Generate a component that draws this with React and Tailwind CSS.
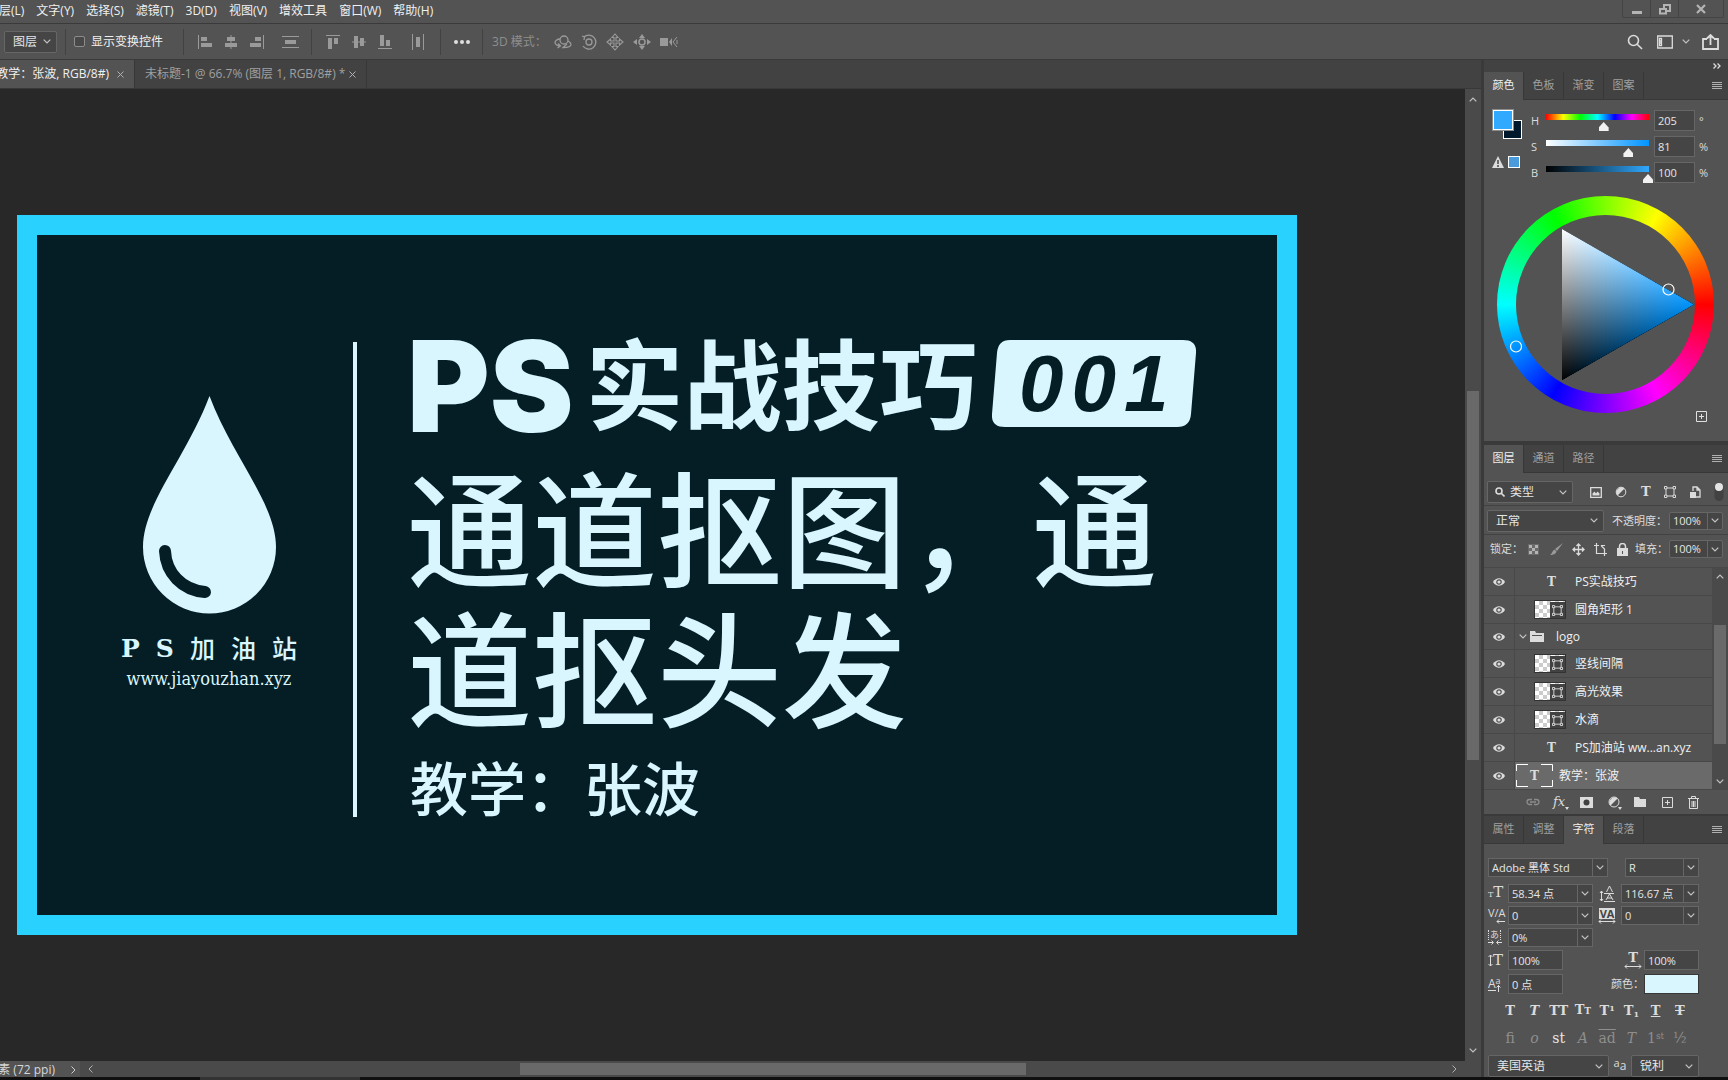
import React from "react";

const FIELD = "bg-[#454545] border border-[#666666] text-[#e6e6e6]";

function Chevron({ className = "" }) {
  return (
    <svg viewBox="0 0 8 5" className={"w-2 h-[5px] shrink-0 pointer-events-none " + className} fill="none" stroke="#c4c4c4" strokeWidth="1.2">
      <path d="M0.7 0.6 4 4 7.3 0.6" />
    </svg>
  );
}

function Select({ label, value, className = "", pad = "pl-2" }) {
  return (
    <span className={"relative flex items-center " + className}>
      <select aria-label={label} defaultValue={value} className={"appearance-none w-full h-full outline-none rounded-[2px] leading-none " + pad + " " + FIELD}>
        <option>{value}</option>
      </select>
      <Chevron className="absolute right-[6px]" />
    </span>
  );
}

function Combo({ label, value, className = "" }) {
  return (
    <span className={"flex shrink-0 items-stretch " + FIELD + " " + className}>
      <input aria-label={label} defaultValue={value} className="min-w-0 flex-1 bg-transparent outline-none pl-[3px]" />
      <button aria-label={label + " ▾"} className="w-[15px] border-l border-[#666666] flex items-center justify-center">
        <Chevron />
      </button>
    </span>
  );
}

function Field({ label, value, className = "" }) {
  return <input aria-label={label} defaultValue={value} className={"outline-none pl-[3px] min-w-0 " + FIELD + " " + className} />;
}

function IconButton({ label, children, className = "" }) {
  return (
    <button aria-label={label} className={"flex items-center justify-center shrink-0 " + className}>
      {children}
    </button>
  );
}

function Svg({ w = 16, h = 16, children, ...rest }) {
  return (
    <svg width={w} height={h} viewBox={`0 0 ${w} ${h}`} fill="none" {...rest}>
      {children}
    </svg>
  );
}

/* ---------- top bars ---------- */

const MENUS = ["图层(L)", "文字(Y)", "选择(S)", "滤镜(T)", "3D(D)", "视图(V)", "增效工具", "窗口(W)", "帮助(H)"];

function MenuBar() {
  return (
    <header className="flex h-6 items-start border-b border-[#3a3a3a] bg-[#535353] shrink-0">
      <nav className="-ml-[13px] flex h-[22px] flex-1 items-center gap-3 whitespace-nowrap text-[#f0f0f0]">
        {MENUS.map((m) => (
          <button key={m}>{m}</button>
        ))}
      </nav>
      <div className="mr-1 flex h-[18px] w-[102px] rounded-b-[2px] border border-t-0 border-[#444444]">
        <IconButton label="最小化" className="w-7 border-r border-[#444444]">
          <Svg w={10} h={14}><path d="M0 9h10v3H0z" fill="#b4b4b4" /></Svg>
        </IconButton>
        <IconButton label="还原" className="w-7 border-r border-[#444444]">
          <Svg w={12} h={12} stroke="#b4b4b4" strokeWidth="2"><path d="M5 6V2h6v6H7" /><path d="M1 6h6v4.500H1z" /></Svg>
        </IconButton>
        <IconButton label="关闭" className="flex-1">
          <Svg w={10} h={10} stroke="#b4b4b4" strokeWidth="2.200"><path d="M1 1l8 8M9 1L1 9" /></Svg>
        </IconButton>
      </div>
    </header>
  );
}

function Sep({ className = "" }) {
  return <span className={"h-[26px] w-px bg-[#424242] shrink-0 " + className} />;
}

function OptionsBar() {
  const g = "#9a9a9a";
  return (
    <div className="flex h-9 items-center border-b border-[#3a3a3a] bg-[#535353] shrink-0 overflow-hidden">
      <Select label="自动选择" value="图层" className="ml-1 h-[22px] w-[53px] shrink-0" />
      <Sep className="ml-2" />
      <label className="ml-2 flex items-center gap-[6px] whitespace-nowrap text-[#f0f0f0]">
        <input type="checkbox" className="h-[11px] w-[11px] appearance-none rounded-[2px] border border-[#8c8c8c] bg-[#484848]" />
        显示变换控件
      </label>
      <Sep className="ml-5" />
      <div className="ml-[14px] flex items-center gap-3">
        <IconButton label="左对齐"><Svg w={14} h={14} fill={g}><path d="M0 0h1v14H0zM3 2h6v4H3zM3 8h11v4H3z" /></Svg></IconButton>
        <IconButton label="水平居中对齐"><Svg w={14} h={14} fill={g}><path d="M6.500 0h1v14h-1zM3 2h8v4H3zM1 8h12v4H1z" /></Svg></IconButton>
        <IconButton label="右对齐"><Svg w={14} h={14} fill={g}><path d="M13 0h1v14h-1zM5 2h6v4H5zM0 8h11v4H0z" /></Svg></IconButton>
        <IconButton label="垂直分布" className="ml-[6px]"><Svg w={17} h={14} fill={g}><path d="M0 1h17v1H0zM3 5h11v4H3zM0 12h17v1H0z" /></Svg></IconButton>
      </div>
      <Sep className="ml-3" />
      <div className="ml-[14px] flex items-center gap-3">
        <IconButton label="顶对齐"><Svg w={14} h={14} fill={g}><path d="M0 0h14v1H0zM2 3h4v11H2zM8 3h4v6H8z" /></Svg></IconButton>
        <IconButton label="垂直居中对齐"><Svg w={14} h={14} fill={g}><path d="M0 6.500h14v1H0zM2 1h4v12H2zM8 3h4v8H8z" /></Svg></IconButton>
        <IconButton label="底对齐"><Svg w={14} h={14} fill={g}><path d="M0 13h14v1H0zM2 0h4v11H2zM8 5h4v6H8z" /></Svg></IconButton>
        <IconButton label="水平分布" className="ml-2"><Svg w={12} h={16} fill={g}><path d="M0 0h1v16H0zM4 3h4v10H4zM11 0h1v16h-1z" /></Svg></IconButton>
      </div>
      <Sep className="ml-4" />
      <IconButton label="对齐选项" className="ml-[13px]">
        <Svg w={16} h={4} fill="#e0e0e0"><circle cx="2" cy="2" r="2" /><circle cx="8" cy="2" r="2" /><circle cx="14" cy="2" r="2" /></Svg>
      </IconButton>
      <Sep className="ml-3" />
      <span className="ml-[9px] whitespace-nowrap text-[#8e8e8e]">3D 模式：</span>
      <div className="ml-[7px] flex items-center gap-[9px]">
        <IconButton label="环绕移动"><Svg w={18} h={16} stroke={g} strokeWidth="1.300"><circle cx="10" cy="6" r="4" /><path d="M6 5C3 5 1 7 1 8.500S3 12 6 12M3.500 14 6.500 12 4 9.500M14 7c2 1 3 2 3 3.500S15 13.500 9 13.500L13 10" /></Svg></IconButton>
        <IconButton label="滚动"><Svg w={16} h={16} stroke={g} strokeWidth="1.300"><circle cx="8" cy="8" r="3" /><path d="M3 3a7 7 0 1 1-1 9M1 2l2.500 1L3 6" /></Svg></IconButton>
        <IconButton label="平移"><Svg w={18} h={18} stroke={g} strokeWidth="1.100"><path d="M8 8V4.500H6L9 1l3 3.500h-2V8h3.500V6L17 9l-3.500 3v-2H10v3.500h2L9 17l-3-3.500h2V10H4.500v2L1 9l3.500-3v2z" /></Svg></IconButton>
        <IconButton label="滑动"><Svg w={18} h={16} fill={g}><path d="M9 0l3 4H6zM9 16l3-4H6zM0 8l4-3v6zM18 8l-4-3v6z" /><circle cx="9" cy="8" r="3" stroke={g} strokeWidth="1.500" fill="none" /></Svg></IconButton>
        <IconButton label="变焦"><Svg w={18} h={14} fill={g}><path d="M0 3h8v8H0zM9 7l3-4v8z" /><path d="M17 2l-4 5 4 5M17 5v4" stroke={g} fill="none" /></Svg></IconButton>
      </div>
      <div className="ml-auto mr-[9px] flex items-center">
        <IconButton label="搜索"><Svg w={16} h={16} stroke="#dcdcdc" strokeWidth="1.600"><circle cx="6.500" cy="6.500" r="5" /><path d="M10.200 10.200 15 15" /></Svg></IconButton>
        <IconButton label="工作区" className="ml-[14px]"><Svg w={16} h={14} stroke="#dcdcdc" strokeWidth="1.300"><path d="M0.700 1h14.600v12H0.700z" /><path d="M2.500 3.500h2v7h-2zM2.500 6h2M2.500 8h2" /></Svg></IconButton>
        <Chevron className="ml-[9px]" />
        <IconButton label="共享" className="ml-3"><Svg w={17} h={16} stroke="#dcdcdc" strokeWidth="1.800"><path d="M5 5H1v10h15V5h-4M8.500 11V1.500M5 4.500 8.500 1 12 4.500" /></Svg></IconButton>
      </div>
    </div>
  );
}

function DocTabs() {
  const x = <Svg w={7} h={7} stroke="#b0b0b0"><path d="M0.500 0.500l6 6M6.500 0.500l-6 6" /></Svg>;
  return (
    <div className="flex h-[29px] shrink-0 whitespace-nowrap border-b border-[#383838] bg-[#424242]">
      <div className="flex w-[135px] items-center justify-end gap-2 overflow-hidden border-r border-[#383838] bg-[#535353] pr-[10px] text-[#f0f0f0]">
        <button>PS实战技巧 @ 66.7% (教学：张波, RGB/8#)</button>
        <IconButton label="关闭教学">{x}</IconButton>
      </div>
      <div className="flex w-[232px] items-center justify-between border-r border-[#383838] pl-[10px] pr-[10px] text-[#a0a0a0]">
        <button>未标题-1 @ 66.7% (图层 1, RGB/8#) *</button>
        <IconButton label="关闭未标题">{x}</IconButton>
      </div>
    </div>
  );
}

/* ---------- artwork ---------- */

function Artwork() {
  return (
    <div className="flex h-[720px] w-[1280px] shrink-0 border-[20px] border-[#29d1ff] bg-[#051e26] text-[#d9f6ff]">
      <div className="flex w-[316px] items-start justify-end pt-[107px]">
        <div className="mr-14 flex w-[176px] flex-col items-center pt-[54px]">
          <svg width="133" height="218" viewBox="0 0 133 218">
            <path d="M66.500 0C90 62 133 108 133 151A66.500 66.500 0 0 1 0 151C0 108 43 62 66.500 0Z" fill="#d9f6ff" />
            <path d="M22 155C23 177 39 194 62 196" fill="none" stroke="#051e26" strokeWidth="12" strokeLinecap="round" />
          </svg>
          <div className="mt-[13px] flex h-10 w-full items-center justify-between text-[25px] font-medium leading-[40px] font-['Noto_Sans_CJK_SC',sans-serif]">
            <span className="pt-1 font-bold font-['DejaVu_Serif',serif]">P</span>
            <span className="pt-1 font-bold font-['DejaVu_Serif',serif]">S</span>
            <span>加</span><span>油</span><span>站</span>
          </div>
          <p className="whitespace-nowrap text-[18px] leading-6 font-['DejaVu_Serif_Condensed','DejaVu_Serif',serif]">www.jiayouzhan.xyz</p>
        </div>
      </div>
      <div className="mt-[107px] h-[475px] w-1 shrink-0 bg-[#d9f6ff]" />
      <div className="ml-[50px] flex flex-1 flex-col items-start whitespace-nowrap pt-[77px] font-['Noto_Sans_CJK_SC',sans-serif]">
        <div className="flex items-center">
          <span className="pt-[14px] font-['Inter',sans-serif] text-[126px] font-black leading-[120px]">PS</span>
          <span className="ml-3 text-[98px] font-bold leading-[120px]">实战技巧</span>
          <span className="relative ml-[14px] mt-2 flex h-[87px] w-[204px] items-center justify-center">
            <svg viewBox="0 0 204 87" className="absolute inset-0 h-full w-full">
              <path d="M18 0H191Q205 0 204 13L199 74Q198 87 185 87H13Q-1 87 0 74L5 13Q6 0 18 0Z" fill="#d9f6ff" />
            </svg>
            <span className="relative flex gap-2 font-['Liberation_Sans',sans-serif] text-[80px] font-bold italic leading-[87px] text-[#051e26]">
              <span>0</span><span>0</span><span>1</span>
            </span>
          </span>
        </div>
        <p className="mt-2 text-[125px] font-medium leading-[140px]">通道抠图，通<br />道抠头发</p>
        <p className="mt-4 pl-[3px] text-[58px] font-medium leading-[72px]">教学：张波</p>
      </div>
    </div>
  );
}

function Workspace() {
  return (
    <main className="flex min-w-0 flex-1 flex-col">
      <DocTabs />
      <div className="flex min-h-0 flex-1">
        <div className="min-w-0 flex-1 overflow-hidden bg-[#282828] pl-[17px] pt-[126px]">
          <Artwork />
        </div>
        <div className="flex w-4 flex-col items-center bg-[#4a4a4a] py-2">
          <Chevron className="rotate-180" />
          <div className="flex-[289]" />
          <div className="w-3 flex-[370] bg-[#696969]" />
          <div className="flex-[288]" />
          <Chevron />
        </div>
      </div>
      <div className="flex h-4 shrink-0 items-center bg-[#4a4a4a]">
        <div className="flex h-full w-20 items-center justify-end gap-4 overflow-hidden whitespace-nowrap bg-[#535353] pr-1 pt-px text-[#d8d8d8]">
          <span>1920 像素 x 1080 像素 (72 ppi)</span>
          <Svg w={5} h={8} stroke="#d0d0d0" className="shrink-0"><path d="M0.500 0.500 4 4 0.500 7.500" /></Svg>
        </div>
        <Svg w={5} h={8} stroke="#b0b0b0" className="ml-2"><path d="M4.500 0.500 1 4l3.500 3.500" /></Svg>
        <div className="flex-[427]" />
        <div className="h-3 flex-[506] bg-[#696969]" />
        <div className="flex-[426]" />
        <Svg w={5} h={8} stroke="#b0b0b0" className="mr-2"><path d="M0.500 0.500 4 4 0.500 7.500" /></Svg>
        <div className="w-4" />
      </div>
    </main>
  );
}

/* ---------- side panels ---------- */

function PanelTabs({ tabs, active }) {
  return (
    <div className="flex h-7 shrink-0 items-stretch border-b border-[#383838] bg-[#424242] text-[11px]">
      {tabs.map((t) => (
        <button
          key={t}
          className={"w-10 border-r border-[#383838] pb-[2px] " + (t === active ? "-mb-px bg-[#535353] text-[#f0f0f0]" : "text-[#a0a0a0]")}
        >
          {t}
        </button>
      ))}
      <IconButton label="面板菜单" className="ml-auto mr-[6px]">
        <Svg w={10} h={8} stroke="#b0b0b0"><path d="M0 0.500h10M0 2.500h10M0 4.500h10M0 6.500h10" /></Svg>
      </IconButton>
    </div>
  );
}

const SLIDERS = [
  { k: "H", v: 205, max: 360, u: "°", g: "bg-[linear-gradient(to_right,#f00,#ff0,#0f0,#0ff,#00f,#f0f,#f00)]" },
  { k: "S", v: 81, max: 100, u: "%", g: "bg-[linear-gradient(to_right,#fff,#0095ff)]" },
  { k: "B", v: 100, max: 100, u: "%", g: "bg-[linear-gradient(to_right,#000,#30a9ff)]" },
];

function ColorPanel() {
  return (
    <section className="shrink-0">
      <PanelTabs tabs={["颜色", "色板", "渐变", "图案"]} active="颜色" />
      <div className="flex h-24 pl-2 pt-[10px]">
        <div className="w-[30px]">
          <div className="grid h-[46px] content-start pl-px">
            <button aria-label="背景色" className="col-start-1 row-start-1 ml-[10px] mt-[10px] h-[19px] w-[19px] border border-white bg-[#00182c]" />
            <button aria-label="前景色" className="col-start-1 row-start-1 h-5 w-5 border border-white bg-[#30a9ff] outline outline-[#8c8c8c]" />
          </div>
          <div className="flex items-center gap-1">
            <Svg w={12} h={12}><path d="M6 0l6 12H0z" fill="#dcdcdc" /><path d="M6 4v4M6 9v2" stroke="#444444" strokeWidth="1.500" /></Svg>
            <button aria-label="校正颜色" className="h-3 w-3 border border-white bg-[#4a9bdc]" />
          </div>
        </div>
        <div className="ml-[9px] flex flex-col gap-[5px] text-[11px] text-[#dcdcdc]">
          {SLIDERS.map((s) => (
            <div key={s.k} className="flex h-[21px] items-center">
              <label htmlFor={"ch" + s.k} className="w-[15px]">{s.k}</label>
              <div className="flex h-[17px] w-[103px] flex-col gap-[2px] pt-[2px]">
                <div className={"h-[6px] shrink-0 " + s.g} />
                <input
                  id={"ch" + s.k}
                  type="range"
                  min="0"
                  max={s.max}
                  defaultValue={s.v}
                  className="-ml-[6px] -mr-1 h-[9px] shrink-0 appearance-none bg-transparent [&::-webkit-slider-thumb]:h-[9px] [&::-webkit-slider-thumb]:w-[10px] [&::-webkit-slider-thumb]:appearance-none [&::-webkit-slider-thumb]:bg-[#f2f2f2] [&::-webkit-slider-thumb]:[clip-path:polygon(50%_0,100%_60%,100%_100%,0_100%,0_60%)]"
                />
              </div>
              <Field label={s.k + " 值"} value={s.v} className="ml-[5px] h-[21px] w-[41px]" />
              <span className="ml-1 text-[11px]">{s.u}</span>
            </div>
          ))}
        </div>
      </div>
      <div className="relative ml-[13px] h-[217px] w-[217px] rounded-full bg-[conic-gradient(from_90deg,#f00,#f0f,#00f,#0ff,#0f0,#ff0,#f00)]">
        <div className="absolute inset-[19px] rounded-full bg-[#535353]" />
        <svg viewBox="0 0 217 217" className="absolute inset-0 isolate">
          <defs>
            <linearGradient id="triW" gradientUnits="userSpaceOnUse" x1="65" y1="33" x2="131" y2="146">
              <stop stopColor="#fff" /><stop offset="1" stopColor="#000" />
            </linearGradient>
            <linearGradient id="triH" gradientUnits="userSpaceOnUse" x1="65" y1="0" x2="197" y2="0">
              <stop stopColor="#000" /><stop offset="1" stopColor="#0095ff" />
            </linearGradient>
          </defs>
          <path d="M65 33 197 108.500 65 184z" fill="url(#triW)" />
          <path d="M65 33 197 108.500 65 184z" fill="url(#triH)" className="mix-blend-plus-lighter" />
          <circle cx="171.500" cy="93.500" r="5.500" fill="none" stroke="#fff" strokeWidth="1.200" />
          <circle cx="19" cy="150.500" r="5.500" fill="none" stroke="#fff" strokeWidth="1.200" />
        </svg>
      </div>
      <div className="flex h-7 items-start justify-end pr-[21px]">
        <IconButton label="添加到色板" className="-mt-[2px]">
          <Svg w={11} h={11} stroke="#e0e0e0"><path d="M0.500 0.500h10v10H0.500zM3 5.500h5M5.500 3v5" /></Svg>
        </IconButton>
      </div>
    </section>
  );
}

function Eye() {
  return (
    <Svg w={12} h={8}>
      <path d="M0 4C3-1 9-1 12 4C9 9 3 9 0 4Z" fill="#dcdcdc" />
      <circle cx="6" cy="4" r="2.200" stroke="#535353" strokeWidth="1.200" fill="#dcdcdc" />
    </Svg>
  );
}

function ShapeIcon({ size = 12, color = "#dcdcdc" }) {
  return (
    <svg width={size} height={size} viewBox="0 0 12 12" fill="none" stroke={color}>
      <path d="M2 2h8v8H2z" />
      <path d="M0.500 0.500h2.400v2.400H0.500zM9.100 0.500h2.400v2.400H9.100zM0.500 9.100h2.400v2.400H0.500zM9.100 9.100h2.400v2.400H9.100z" fill="#454545" />
    </svg>
  );
}

function Thumb() {
  return (
    <span className="flex h-[19px] w-8 items-end justify-end border border-[#333333] bg-white bg-[conic-gradient(#ccc_25%,#fff_0_50%,#ccc_0_75%,#fff_0)] bg-[length:8px_8px]">
      <span className="flex h-4 w-[15px] items-center justify-center bg-[#424242]"><ShapeIcon size={11} /></span>
    </span>
  );
}

const T = ({ className = "" }) => <span className={"font-['DejaVu_Serif',serif] font-bold text-[#dcdcdc] " + className}>T</span>;

const LAYERS = [
  { n: "PS实战技巧", t: "text" },
  { n: "圆角矩形 1", t: "shape" },
  { n: "logo", t: "group" },
  { n: "竖线间隔", t: "shape" },
  { n: "高光效果", t: "shape" },
  { n: "水滴", t: "shape" },
  { n: "PS加油站 ww...an.xyz", t: "text" },
  { n: "教学：张波", t: "sel" },
];

function LayerRow({ l }) {
  const sel = l.t === "sel";
  return (
    <li className={"flex border-b border-[#484848] " + (l.t === "group" ? "h-[26px]" : "h-7")}>
      <IconButton label={"显示 " + l.n} className="w-[31px] border-r border-[#484848]"><Eye /></IconButton>
      <button className={"flex flex-1 items-center whitespace-pre text-[#f0f0f0] " + (sel ? "bg-[#6a6a6a]" : "")}>
        {l.t === "text" && <span className="ml-[19px] flex w-[41px] justify-center pr-[6px]"><T className="text-[12px]" /></span>}
        {l.t === "shape" && <span className="ml-[19px] w-[41px]"><Thumb /></span>}
        {l.t === "group" && (
          <span className="ml-1 flex w-[37px] items-center gap-[3px]">
            <Chevron />
            <Svg w={14} h={11}><path d="M0 0h5l1 2h8v9H0z" fill="#dcdcdc" /><path d="M2 4h10v1H2z" fill="#535353" /></Svg>
          </span>
        )}
        {sel && (
          <span className="ml-px mr-[6px] grid">
            <Svg w={37} h={23} stroke="#ffffff" className="col-start-1 row-start-1"><path d="M12 0.500H0.500V7M25 0.500h11.500V7M12 22.500H0.500V16M25 22.500h11.500V16" /></Svg>
            <span className="col-start-1 row-start-1 self-center text-center"><T className="text-[12px]" /></span>
          </span>
        )}
        <span>{l.n}</span>
      </button>
    </li>
  );
}

function LayersPanel() {
  const c = "#dcdcdc";
  return (
    <section className="shrink-0 border-t-4 border-[#3a3a3a]">
      <PanelTabs tabs={["图层", "通道", "路径"]} active="图层" />
      <div className="flex h-[33px] items-center border-b border-[#424242] pl-[3px] pt-[6px]">
        <span className="grid h-[22px] w-[86px] items-center">
          <Select label="滤镜类型" value="类型" pad="pl-[22px]" className="col-start-1 row-start-1 h-full" />
          <Svg w={10} h={10} stroke={c} strokeWidth="1.600" className="pointer-events-none relative col-start-1 row-start-1 ml-2"><circle cx="4" cy="4" r="3" /><path d="M6 6l3.500 3.500" /></Svg>
        </span>
        <div className="ml-[17px] flex flex-1 items-center justify-between pr-1">
          <IconButton label="像素图层"><Svg w={12} h={11} stroke={c} strokeWidth="1.300"><path d="M0.700 0.700h10.600v9.600H0.700z" /><path d="M2.500 8.500V6.500l2-2 1.500 2 1.500-2 2 2v2z" fill={c} stroke="none" /></Svg></IconButton>
          <IconButton label="调整图层"><Svg w={12} h={12}><circle cx="6" cy="6" r="4.800" stroke={c} /><path d="M9.500 2.500A5 5 0 0 0 2.500 9.500z" fill={c} /></Svg></IconButton>
          <IconButton label="文字图层"><T className="text-[13px] leading-4" /></IconButton>
          <IconButton label="形状图层"><ShapeIcon /></IconButton>
          <IconButton label="智能对象"><Svg w={11} h={13} stroke={c} strokeWidth="1.300"><path d="M3 5V1h4l3 3v7H6M7 1v3h3" /><path d="M0 6h6v6H0z" fill={c} stroke="none" /></Svg></IconButton>
          <IconButton label="滤镜开关"><Svg w={10} h={20}><rect x="0.500" y="2" width="9" height="17" rx="4.500" fill="#424242" /><circle cx="5" cy="5" r="4" fill="#e4e4e4" /></Svg></IconButton>
        </div>
      </div>
      <div className="flex h-[29px] items-center border-b border-[#424242] pl-[3px] pt-px">
        <Select label="混合模式" value="正常" className="h-[22px] w-[117px]" />
        <label className="ml-2 min-w-0 flex-1 whitespace-nowrap text-[11px] text-[#dcdcdc]">不透明度：</label>
        <Combo label="不透明度" value="100%" className="mr-[5px] h-[18px] w-[54px] rounded-[2px] text-[11px]" />
      </div>
      <div className="flex h-8 items-center pb-[4px] pl-[6px] text-[#dcdcdc]">
        <span className="w-8 whitespace-nowrap text-[11px]">锁定：</span>
        <IconButton label="锁定透明像素" className="w-[23px]"><Svg w={11} h={11} fill="#9a9a9a"><path d="M0 0h11v11H0z" fill="#6a6a6a" /><path d="M1 1h3v3H1zM7 1h3v3H7zM4 4h3v3H4zM1 7h3v3H1zM7 7h3v3H7z" fill="#b4b4b4" /></Svg></IconButton>
        <IconButton label="锁定图像像素" className="w-[22px]"><Svg w={13} h={12} fill="#9a9a9a"><path d="M13 0 7 8 5 6zM4.500 6.500 6.500 8.500C6 11 3 12 0 12 2 11 2 8 4.500 6.500z" /></Svg></IconButton>
        <IconButton label="锁定位置" className="w-[22px]"><Svg w={13} h={13} stroke={c} strokeWidth="1.300"><path d="M6.500 1v11M1 6.500h11M4.500 3l2-2 2 2M4.500 10l2 2 2-2M3 4.500l-2 2 2 2M10 4.500l2 2-2 2" /></Svg></IconButton>
        <IconButton label="锁定嵌套" className="w-[22px]"><Svg w={13} h={13} stroke={c} strokeWidth="1.200"><path d="M2.500 0v10.500H13M0 2.500h5M7 2.500l3.500 3.500v7M7 2.500h4" /></Svg></IconButton>
        <IconButton label="全部锁定" className="w-[22px]"><Svg w={11} h={13}><path d="M0 5h11v8H0z" fill={c} /><path d="M2.500 6V3.500a3 3 0 0 1 6 0V6" stroke={c} strokeWidth="1.500" /><path d="M5 8h1v3H5z" fill="#535353" /></Svg></IconButton>
        <span className="min-w-0 flex-1 whitespace-nowrap pl-[2px] text-[11px]">填充：</span>
        <Combo label="填充" value="100%" className="mr-[5px] h-[18px] w-[54px] rounded-[2px] text-[11px]" />
      </div>
      <div className="flex border-t border-[#484848]">
        <ul className="min-w-0 flex-1">
          {LAYERS.map((l) => <LayerRow key={l.n} l={l} />)}
        </ul>
        <div className="flex w-4 flex-col items-center bg-[#4a4a4a] py-[6px]">
          <Chevron className="rotate-180" />
          <div className="flex-[45]" />
          <div className="w-3 flex-[118] bg-[#6a6a6a]" />
          <div className="flex-[34]" />
          <Chevron />
        </div>
      </div>
      <div className="flex h-6 items-center pl-[38px]">
        <IconButton label="链接图层" className="w-[21px]"><Svg w={14} h={8} stroke="#8c8c8c" strokeWidth="1.300"><path d="M6 1.500H3.500a2.500 2.500 0 0 0 0 5H6M8 1.500h2.500a2.500 2.500 0 0 1 0 5H8M4 4h6" /></Svg></IconButton>
        <IconButton label="图层样式" className="w-8 pl-1 font-['DejaVu_Serif',serif] text-[13px] italic text-[#dcdcdc]">fx<Svg w={4} h={3} fill={c} className="self-end"><path d="M0 0h4L2 3z" /></Svg></IconButton>
        <IconButton label="蒙版" className="w-[22px]"><Svg w={13} h={11}><path d="M0 0h13v11H0z" fill={c} /><circle cx="6.500" cy="5.500" r="3" fill="#424242" /></Svg></IconButton>
        <IconButton label="新建调整图层" className="w-8 pl-1"><Svg w={15} h={15}><circle cx="6" cy="7" r="5" stroke={c} /><path d="M9.500 3.500A5 5 0 0 0 2.500 10.500z" fill={c} /><path d="M10 12h4l-2 3z" fill={c} /></Svg></IconButton>
        <IconButton label="新建组" className="w-[22px]"><Svg w={12} h={10}><path d="M0 0h5l1 2h6v8H0z" fill={c} /></Svg></IconButton>
        <IconButton label="新建图层" className="w-8"><Svg w={11} h={11} stroke={c}><path d="M0.500 0.500h10v10H0.500zM3 5.500h5M5.500 3v5" /></Svg></IconButton>
        <IconButton label="删除图层" className="w-[21px]"><Svg w={11} h={13} stroke={c}><path d="M0 2.500h11M3.500 2.500v-2h4v2M1.500 2.500v10h8v-10M4 5v6M5.500 5v6M7 5v6" /></Svg></IconButton>
      </div>
    </section>
  );
}

const STYLE_ROW = [
  <b>T</b>, <i>T</i>, "TT", <>T<small className="text-[9px]">T</small></>, <>T<sup className="text-[8px]">1</sup></>, <>T<sub className="text-[8px]">1</sub></>, <u>T</u>, <s>T</s>,
];
const STYLE_NAMES = ["仿粗体", "仿斜体", "全部大写", "小型大写", "上标", "下标", "下划线", "删除线"];
const OT_ROW = ["fi", <i>o</i>, "st", <i>A</i>, <span className="overline">ad</span>, <i>T</i>, <>1<sup className="text-[9px]">st</sup></>, "½"];
const OT_NAMES = ["标准连字", "上下文替代字", "自由连字", "花饰字", "文体替代字", "标题替代字", "序数字", "分数字"];

function CharPanel() {
  const c = "#dcdcdc";
  const serif = "font-['DejaVu_Serif',serif]";
  return (
    <section className="min-h-0 flex-1 border-t-2 border-[#3a3a3a]">
      <PanelTabs tabs={["属性", "调整", "字符", "段落"]} active="字符" />
      <div className="flex flex-col pl-1 pr-[29px] pt-[14px] text-[11px] text-[#dcdcdc]">
        <div className="flex h-[19px] justify-between">
          <Combo label="字体" value="Adobe 黑体 Std" className="w-[120px]" />
          <Combo label="字体样式" value="R" className="w-[74px]" />
        </div>
        <div className="mt-[7px] flex h-[19px] items-center">
          <span className={"flex w-5 items-baseline text-[#dcdcdc] " + serif}><span className="text-[8px]">T</span><span className="text-[15px]">T</span></span>
          <Combo label="字号" value="58.34 点" className="h-full w-[85px]" />
          <span className="flex flex-1 justify-center"><Svg w={16} h={16} stroke={c}><path d="M2.500 5v10M1 7l1.500-2L4 7M1 13l1.500 2L4 13M5 15.500h11M5 7.500h10M7 14l3.500-6 3.500 6M8 12h5M7.500 6l3-6 3 6" /></Svg></span>
          <Combo label="行距" value="116.67 点" className="h-full w-[78px]" />
        </div>
        <div className="mt-[3px] flex h-[19px] items-center">
          <span className="flex w-5 flex-col text-[11px] leading-3">V/A<Svg w={18} h={5} stroke={c}><path d="M9 2.500h8M11 0.500l-2 2 2 2" /></Svg></span>
          <Combo label="字偶间距" value="0" className="h-full w-[85px]" />
          <span className="flex flex-1 flex-col items-center"><span className="bg-[#dcdcdc] px-px text-[11px] font-bold leading-[11px] text-[#424242]">VA</span><Svg w={18} h={5} stroke={c}><path d="M1 2.500h16M3 0.500l-2 2 2 2M15 0.500l2 2-2 2" /></Svg></span>
          <Combo label="字距" value="0" className="h-full w-[78px]" />
        </div>
        <div className="mt-[3px] flex h-[19px] items-center">
          <span className="flex w-5 flex-col"><span className="w-[13px] border-x border-dotted border-[#dcdcdc] text-center text-[9px] leading-[10px]">あ</span><Svg w={14} h={5} stroke={c}><path d="M0 2.500h5M3.500 0.500l2 2-2 2M14 2.500H9M10.500 0.500l-2 2 2 2" /></Svg></span>
          <Combo label="比例间距" value="0%" className="h-full w-[85px]" />
        </div>
        <div className="mt-[3px] flex h-5 items-center">
          <span className={"flex w-5 items-center " + serif}><Svg w={5} h={13} stroke={c}><path d="M2.500 1v11M0.500 3l2-2 2 2M0.500 10l2 2 2-2" /></Svg><span className="text-[15px] leading-4">T</span></span>
          <Field label="垂直缩放" value="100%" className="h-full w-[55px]" />
          <span className={"ml-auto flex w-[20px] flex-col " + serif}><span className="w-[18px] text-center text-[13px] font-bold leading-[13px]">T</span><Svg w={18} h={5} stroke={c}><path d="M1 2.500h16M3 0.500l-2 2 2 2M15 0.500l2 2-2 2" /></Svg></span>
          <Field label="水平缩放" value="100%" className="h-full w-[55px]" />
        </div>
        <div className="mt-1 flex h-5 items-center">
          <span className="flex w-5 items-start"><span className="border-b border-[#dcdcdc] text-[12px] leading-[13px]">A</span><span className="flex flex-col items-center text-[9px] leading-[8px]">a<Svg w={5} h={7} stroke={c}><path d="M2.500 0v7M0.500 2.500l2-2 2 2" /></Svg></span></span>
          <Field label="基线偏移" value="0 点" className="h-full w-[55px]" />
          <span className="ml-auto whitespace-nowrap">颜色：</span>
          <button aria-label="文字颜色" className="h-full w-[55px] border border-[#383838] bg-[#d9f6ff]" />
        </div>
        <div className={"ml-[10px] mt-[6px] grid h-5 w-[194px] grid-cols-8 text-[13px] " + serif}>
          {STYLE_ROW.map((s, i) => <button key={i} aria-label={STYLE_NAMES[i]} className="whitespace-nowrap font-bold leading-5">{s}</button>)}
        </div>
        <div className={"ml-[10px] mt-2 grid h-5 w-[194px] grid-cols-8 text-[14px] " + serif}>
          {OT_ROW.map((s, i) => <button key={i} aria-label={OT_NAMES[i]} className={"whitespace-nowrap leading-5 " + (i === 2 ? "text-[#e6e6e6]" : "text-[#8e8e8e]")}>{s}</button>)}
        </div>
        <div className="mt-[7px] flex h-[22px] items-center text-[12px]">
          <Select label="语言" value="美国英语" className="h-full w-[121px]" />
          <span className="flex flex-1 items-start justify-center text-[12px] leading-4"><span className="text-[11px] leading-[10px]">a</span><span>a</span></span>
          <Select label="消除锯齿" value="锐利" className="h-full w-[68px]" />
        </div>
      </div>
    </section>
  );
}

export default function App() {
  return (
    <div className="flex h-screen w-full flex-col overflow-hidden bg-[#535353] text-[12px] leading-4 font-['Open_Sans','Noto_Sans_CJK_SC',sans-serif]">
      <MenuBar />
      <OptionsBar />
      <div className="flex min-h-0 flex-1">
        <Workspace />
        <aside className="flex w-[247px] shrink-0 flex-col border-l-[3px] border-[#3a3a3a] bg-[#535353]">
          <div className="flex h-3 shrink-0 items-center justify-end bg-[#424242] pr-[7px]">
            <IconButton label="折叠面板"><Svg w={8} h={6} stroke="#dcdcdc" strokeWidth="1.300"><path d="M0.500 0.500 3 3 0.500 5.500M4.500 0.500 7 3 4.500 5.500" /></Svg></IconButton>
          </div>
          <ColorPanel />
          <LayersPanel />
          <CharPanel />
        </aside>
      </div>
      <div className="flex h-[3px] shrink-0 bg-[#101010]">
        <div className="ml-[200px] w-40 bg-[#333333]" />
      </div>
    </div>
  );
}
